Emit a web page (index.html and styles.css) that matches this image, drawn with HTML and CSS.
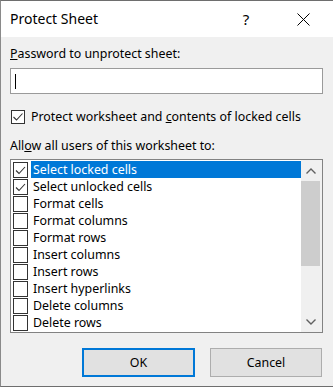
FILE: index.html
```html
<!DOCTYPE html>
<html>
<head>
<meta charset="utf-8">
<link rel="stylesheet" href="styles.css">
</head>
<body>
<div class="dialog">
  <div class="titlebar">
    <span class="title">Protect Sheet</span>
    <span class="tb-btn help">?</span>
    <span class="tb-btn close">
      <svg width="13" height="13" viewBox="0 0 13 13"><path d="M0.5 0.5 L12.5 12.5 M12.5 0.5 L0.5 12.5" stroke="#000" stroke-width="1" fill="none"/></svg>
    </span>
  </div>
  <div class="content">
    <div class="label pw-label"><u>P</u>assword to unprotect sheet:</div>
    <div class="input"><span class="caret"></span></div>
    <div class="check-row">
      <span class="cb cb-main checked">
        <svg width="12" height="12" viewBox="0 0 12 12"><path d="M1.5 6 L4.5 9 L10.5 2.5" stroke="#333" stroke-width="1.1" fill="none"/></svg>
      </span>
      <span class="label">Protect worksheet and <u>c</u>ontents of locked cells</span>
    </div>
    <div class="label allow-label">All<u>o</u>w all users of this worksheet to:</div>
    <div class="listbox">
      <div class="rows">
        <div class="row selected"><span class="cb"><svg width="13" height="13" viewBox="0 0 13 13"><path d="M2 6.5 L5 9.5 L11 3" stroke="#333" stroke-width="1.1" fill="none"/></svg></span><span class="row-text">Select locked cells</span></div>
        <div class="row"><span class="cb"><svg width="13" height="13" viewBox="0 0 13 13"><path d="M2 6.5 L5 9.5 L11 3" stroke="#333" stroke-width="1.1" fill="none"/></svg></span><span class="row-text">Select unlocked cells</span></div>
        <div class="row"><span class="cb"></span><span class="row-text">Format cells</span></div>
        <div class="row"><span class="cb"></span><span class="row-text">Format columns</span></div>
        <div class="row"><span class="cb"></span><span class="row-text">Format rows</span></div>
        <div class="row"><span class="cb"></span><span class="row-text">Insert columns</span></div>
        <div class="row"><span class="cb"></span><span class="row-text">Insert rows</span></div>
        <div class="row"><span class="cb"></span><span class="row-text">Insert hyperlinks</span></div>
        <div class="row"><span class="cb"></span><span class="row-text">Delete columns</span></div>
        <div class="row"><span class="cb"></span><span class="row-text">Delete rows</span></div>
      </div>
      <div class="scrollbar">
        <div class="arrow up"><svg width="10" height="6" viewBox="0 0 10 6"><path d="M0.5 5.5 L5 1 L9.5 5.5" stroke="#606060" stroke-width="1.4" fill="none"/></svg></div>
        <div class="thumb"></div>
        <div class="track"></div>
        <div class="arrow down"><svg width="10" height="6" viewBox="0 0 10 6"><path d="M0.5 0.5 L5 5 L9.5 0.5" stroke="#606060" stroke-width="1.4" fill="none"/></svg></div>
      </div>
    </div>
    <div class="buttons">
      <button class="btn default">OK</button>
      <button class="btn">Cancel</button>
    </div>
  </div>
</div>
</body>
</html>
```

FILE: styles.css
```css
html, body {
  margin: 0;
  padding: 0;
  background: #f0f0f0;
}
body {
  font-family: "Noto Sans", "Open Sans", sans-serif;
  font-size: 12.4px;
  color: #000;
}
.dialog {
  width: 333px;
  height: 387px;
  box-sizing: border-box;
  border-top: 1px solid #6e6e6e;
  border-left: 1px solid #8a8a8a;
  border-bottom: 1px solid #6e6e6e;
  display: flex;
  flex-direction: column;
  background: #f0f0f0;
}
.titlebar {
  height: 36px;
  background: #fff;
  display: flex;
  align-items: center;
  flex: none;
}
.title {
  font-size: 14px;
  padding-left: 9px;
  margin-top: -1px;
}
.tb-btn {
  display: flex;
  align-items: center;
  justify-content: center;
  height: 36px;
}
.help {
  margin-left: auto;
  width: 54px;
  font-size: 15px;
  color: #000;
}
.close {
  width: 60px;
}
.content {
  flex: 1;
  display: flex;
  flex-direction: column;
  padding: 0 10px 0 9px;
}
.label {
  line-height: 16px;
  white-space: nowrap;
}
.pw-label {
  margin-top: 9px;
}
.input {
  margin-top: 6px;
  height: 26px;
  box-sizing: border-box;
  border: 1px solid #9a9a9a;
  background: #fff;
  display: flex;
  align-items: center;
  padding-left: 4px;
}
.caret {
  width: 1px;
  height: 15px;
  background: #000;
}
.check-row {
  margin-top: 15px;
  display: flex;
  align-items: center;
  height: 16px;
}
.cb {
  box-sizing: border-box;
  border: 1px solid #333;
  background: #fff;
  display: flex;
  align-items: center;
  justify-content: center;
  flex: none;
}
.cb-main {
  width: 14px;
  height: 14px;
  margin-left: 1px;
  margin-right: 6px;
}
.allow-label {
  margin-top: 13px;
}
.listbox {
  margin-top: 5px;
  height: 174px;
  box-sizing: border-box;
  border: 1px solid #828282;
  background: #fff;
  display: flex;
}
.rows {
  flex: 1;
  padding-top: 1px;
  padding-left: 2px;
}
.row {
  height: 17px;
  display: flex;
  align-items: center;
}
.row .cb {
  width: 15px;
  height: 16px;
  margin-top: 1px;
}
.row-text {
  flex: 1;
  height: 17px;
  line-height: 17px;
  padding-left: 2px;
  margin-left: 3px;
  white-space: nowrap;
}
.row.selected .row-text {
  background: #0078d7;
  color: #fff;
}
.scrollbar {
  width: 21px;
  background: #f0f0f0;
  display: flex;
  flex-direction: column;
}
.arrow {
  height: 21px;
  display: flex;
  align-items: center;
  justify-content: center;
  padding-right: 2px;
}
.thumb {
  height: 85px;
  width: 19px;
  background: #cdcdcd;
}
.track {
  flex: 1;
}
.buttons {
  margin-top: 15px;
  display: flex;
  justify-content: flex-end;
  gap: 15px;
  margin-right: 1px;
}
.btn {
  height: 29px;
  width: 112px;
  box-sizing: border-box;
  background: #e1e1e1;
  border: 1px solid #adadad;
  font-family: "Noto Sans", "Open Sans", sans-serif;
  font-size: 12.4px;
  color: #000;
  padding: 0;
  margin: 0;
}
.btn.default {
  width: 113px;
  border: 2px solid #0078d7;
}
```
